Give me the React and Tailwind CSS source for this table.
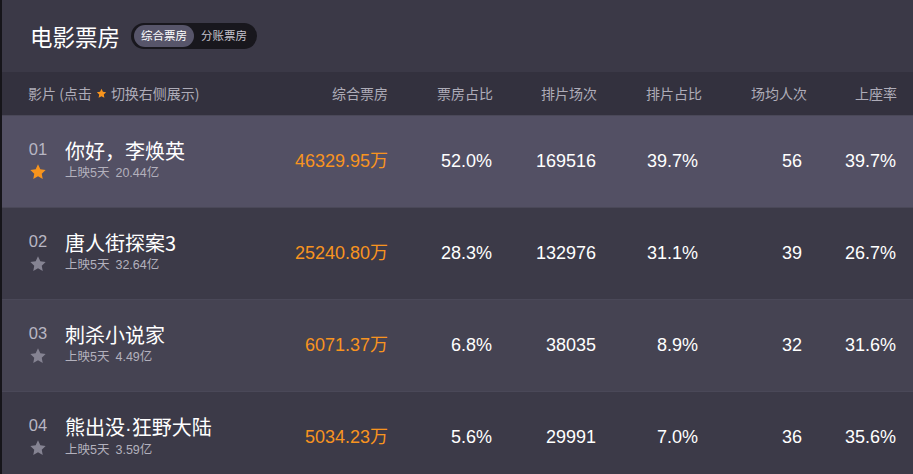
import React from "react";

const rows = [
  { rank: "01", name: ["你好，李焕英"], sub: "上映5天", total: "20.44亿", box: "46329.95万", pct: "52.0%", shows: "169516", showPct: "39.7%", avg: "56", seat: "39.7%", active: true, bg: "bg-[#535064]" },
  { rank: "02", name: ["唐人街探案3"], sub: "上映5天", total: "32.64亿", box: "25240.80万", pct: "28.3%", shows: "132976", showPct: "31.1%", avg: "39", seat: "26.7%", bg: "bg-[#3c3a48]" },
  { rank: "03", name: ["刺杀小说家"], sub: "上映5天", total: "4.49亿", box: "6071.37万", pct: "6.8%", shows: "38035", showPct: "8.9%", avg: "32", seat: "31.6%", bg: "bg-[#454352]" },
  { rank: "04", name: ["熊出没", "狂野大陆"], sub: "上映5天", total: "3.59亿", box: "5034.23万", pct: "5.6%", shows: "29991", showPct: "7.0%", avg: "36", seat: "35.6%", bg: "bg-[#3c3a48]" },
];

const Star = ({ className }) => (
  <svg viewBox="0 0 24 24" className={className} fill="currentColor">
    <path d="M12 1.8l3.1 6.6 7.1.9-5.2 4.9 1.3 7.1L12 17.8l-6.3 3.5 1.3-7.1-5.2-4.9 7.1-.9z" />
  </svg>
);

const grid = "grid grid-cols-[256px_104px_105px_104px_105px_105px_90px] pl-[26px] pr-[16px]";
const num = { fontFamily: '"Liberation Sans", "Noto Sans CJK SC", sans-serif' };
const cjk = { fontFamily: '"Noto Sans CJK SC", "Liberation Sans", sans-serif' };

export default function App() {
  return (
    <div className="w-[913px] h-[474px] overflow-hidden bg-[#3b3947] border-l-2 border-[#16151a]" style={cjk}>
      <div className="h-[72px] flex items-center pl-[28px] gap-[11px]">
        <div className="text-[22.5px] text-white leading-none">电影票房</div>
        <div className="flex items-center h-[26px] rounded-full bg-[#18171d] px-[3px] gap-[7px]">
          <div className="h-[22px] px-[7px] rounded-full bg-[#57556a] text-white text-[11.5px] flex items-center">综合票房</div>
          <div className="text-[#c4c2cc] text-[11.5px] pr-[7px]">分账票房</div>
        </div>
      </div>
      <div className={`${grid} h-[43px] items-center bg-[#33313e] text-[14px] text-[#aeacb8]`}>
        <div className="flex items-center">
          影片 (点击<Star className="w-[11px] h-[11px] text-[#f7941d] mx-[4px]" />切换右侧展示)
        </div>
        <div className="text-right">综合票房</div>
        <div className="text-right">票房占比</div>
        <div className="text-right">排片场次</div>
        <div className="text-right">排片占比</div>
        <div className="text-right">场均人次</div>
        <div className="text-right">上座率</div>
      </div>
      {rows.map((r) => (
        <div key={r.rank} className={`${grid} h-[92px] items-center ${r.bg} border-t border-[#4a4858]`}>
          <div className="self-start mt-[23px] flex items-start gap-[17px]">
            <div className="flex flex-col items-center w-[20px]">
              <div className="text-[16.5px] text-[#b8b6c3] leading-[20px]" style={num}>{r.rank}</div>
              <Star className={`w-[18px] h-[18px] mt-[4px] ${r.active ? "text-[#f7941d]" : "text-[#858392]"}`} />
            </div>
            <div className="flex flex-col">
              <div className="text-[20px] text-white leading-[24px]">
                {r.name.length > 1 ? (
                  <>
                    {r.name[0]}<span style={num}>·</span>{r.name[1]}
                  </>
                ) : r.name[0]}
              </div>
              <div className="text-[12.5px] text-[#b3b1bd] leading-[16px] mt-[2px]" style={num}>
                {r.sub}<span className="ml-[6px]">{r.total}</span>
              </div>
            </div>
          </div>
          <div className="text-right text-[18px] text-[#f8941f]" style={num}>{r.box}</div>
          <div className="text-right text-[18px] text-white pr-[1px]" style={num}>{r.pct}</div>
          <div className="text-right text-[18px] text-white pr-[1px]" style={num}>{r.shows}</div>
          <div className="text-right text-[18px] text-white pr-[4px]" style={num}>{r.showPct}</div>
          <div className="text-right text-[18px] text-white pr-[5px]" style={num}>{r.avg}</div>
          <div className="text-right text-[18px] text-white pr-[1px]" style={num}>{r.seat}</div>
        </div>
      ))}
    </div>
  );
}
